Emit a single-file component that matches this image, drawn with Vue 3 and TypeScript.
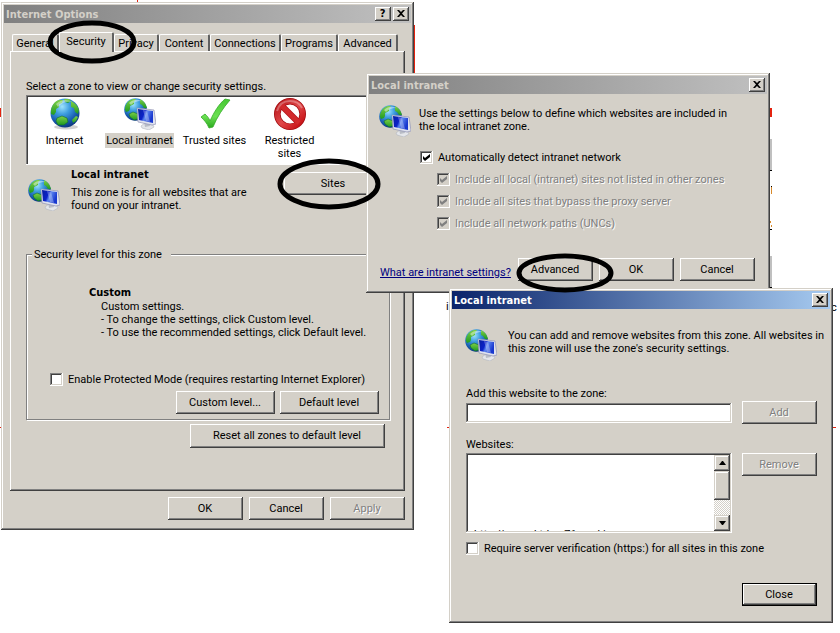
<script setup lang="ts">
import { ref } from 'vue'

interface Zone {
  id: string
  name: string
  icon: string
}

const tabs = ['General', 'Security', 'Privacy', 'Content', 'Connections', 'Programs', 'Advanced']
const activeTab = ref('Security')

const zones: Zone[] = [
  { id: 'internet', name: 'Internet', icon: 'globe' },
  { id: 'intranet', name: 'Local intranet', icon: 'intranet' },
  { id: 'trusted', name: 'Trusted sites', icon: 'tick' },
  { id: 'restricted', name: 'Restricted sites', icon: 'forbidden' },
]
const activeZone = ref('intranet')

const protectedMode = ref(false)
const autoDetect = ref(true)
const includeRules = ref([
  { id: 'local', label: 'Include all local (intranet) sites not listed in other zones', on: true },
  { id: 'proxy', label: 'Include all sites that bypass the proxy server', on: true },
  { id: 'unc', label: 'Include all network paths (UNCs)', on: true },
])

const newSite = ref('')
const sites = ref(['http://uawmktdvm71.mwkin.pes'])
const requireHttps = ref(false)
</script>

<template>
  <main class="desktop">
    <svg class="defs" width="0" height="0" aria-hidden="true">
      <defs>
        <radialGradient id="sea" cx="40%" cy="28%" r="75%">
          <stop offset="0" stop-color="#9fe3fb" />
          <stop offset="0.35" stop-color="#3f9fe0" />
          <stop offset="0.75" stop-color="#1557ac" />
          <stop offset="1" stop-color="#0c3479" />
        </radialGradient>
        <linearGradient id="land" x1="0" y1="0" x2="0" y2="1">
          <stop offset="0" stop-color="#7fd048" />
          <stop offset="1" stop-color="#1f9a22" />
        </linearGradient>
        <linearGradient id="screen" x1="0" y1="0" x2="1" y2="0.4">
          <stop offset="0" stop-color="#0a1fa0" />
          <stop offset="0.45" stop-color="#0b22c8" />
          <stop offset="0.6" stop-color="#5d86f0" />
          <stop offset="1" stop-color="#1838cf" />
        </linearGradient>
        <linearGradient id="leaf" x1="0" y1="0" x2="0" y2="1">
          <stop offset="0" stop-color="#46c832" />
          <stop offset="0.6" stop-color="#6be052" />
          <stop offset="1" stop-color="#2aa81e" />
        </linearGradient>
        <linearGradient id="ruby" x1="0" y1="0" x2="1" y2="1">
          <stop offset="0" stop-color="#b81418" />
          <stop offset="0.5" stop-color="#e0494a" />
          <stop offset="1" stop-color="#c40a0e" />
        </linearGradient>
        <symbol id="globe" viewBox="0 0 32 32">
          <ellipse cx="17" cy="29" rx="12" ry="2.500" fill="#000" opacity="0.18" />
          <circle cx="16" cy="15" r="14.500" fill="url(#sea)" />
          <path d="M2 12C3 7 6 3 10 2l4 0-1 3-3 1v3l-3 2 0 3-2 3-3-1z" fill="url(#land)" />
          <path d="M15 1l5 0 2 2-3 2-3-1z" fill="url(#land)" />
          <path d="M22 3c4 2 7 5 8 9l-1 4-3-2-1-4-3-1 0-3z" fill="url(#land)" />
          <path d="M8 20l5-2 5 2 1 4-4 3-6 0-2-4z" fill="url(#land)" stroke="#0d6b2c" stroke-width="0.600" />
          <path d="M27 18l2 1-2 4-3 2-1-3z" fill="url(#land)" />
          <path d="M7 6c5-5 12-5 16-2-5-1-10 0-14 5z" fill="#fff" opacity="0.4" />
        </symbol>
        <symbol id="intranet" viewBox="0 0 32 32">
          <circle cx="11.500" cy="11.500" r="11.300" fill="url(#sea)" />
          <path d="M1 10C2 5 5 2 9 1l3 0-2 3v2l-4 2 0 3-1 2-3 1-1-2z" fill="url(#land)" />
          <path d="M16 1c4 2 6 5 7 9l-3 0-2-3-2-1 0-3z" fill="url(#land)" />
          <path d="M5 16l4-2 5 2v5l-4 1-4-3z" fill="url(#land)" stroke="#0d6b2c" stroke-width="0.600" />
          <path d="M5 5c4-4 9-4 12-2-4 0-7 1-10 4z" fill="#fff" opacity="0.45" />
          <path d="M17 28l4-3 8 2 1 2-5 3-7-2z" fill="#e4e6ea" stroke="#b2b6bd" stroke-width="0.600" />
          <path d="M20 24h5l1 4-5 1z" fill="#b9bdc6" />
          <path d="M13 10l17 2 2 14-4 1-14-3z" fill="#dfe2ee" stroke="#9094b4" stroke-width="0.700" />
          <path d="M14 11l15 2v12l-14-3z" fill="url(#screen)" />
          <path d="M19 12l4 1 3 11-4-1z" fill="#fff" opacity="0.28" />
        </symbol>
        <symbol id="tick" viewBox="0 0 32 32">
          <path d="M2 19l4-3c2 2 4 4 5 7C15 14 20 6 26 1l5 1C24 10 18 19 14 29l-4 1C8 25 5 22 2 19z" fill="url(#leaf)" stroke="#35ab28" stroke-width="0.800" />
        </symbol>
        <symbol id="forbidden" viewBox="0 0 32 32">
          <circle cx="16" cy="16" r="12.700" fill="#fff" stroke="#a30c10" stroke-width="6.600" />
          <path d="M7 7l18 18" stroke="#b01216" stroke-width="6.200" />
          <circle cx="16" cy="16" r="12.700" fill="none" stroke="url(#ruby)" stroke-width="5" />
          <path d="M7 7l18 18" stroke="#d22a2c" stroke-width="4.800" />
          <path d="M3 13C5 6 10 3 16 3s10 3 12 7" fill="none" stroke="#fff" stroke-width="2" opacity="0.3" />
        </symbol>
        <symbol id="cross" viewBox="0 0 10 9">
          <path d="M1 1h2l2 2 2-2h2L6 4.500 9 8H7L5 6 3 8H1l3-3.500z" fill="#000" />
        </symbol>
      </defs>
    </svg>

    <!-- Page fragments that peek out behind the dialogs -->
    <svg class="layer" width="840" height="633" aria-hidden="true">
      <g fill="#e4230f">
        <path d="M137 0h1v2h-1z" />
        <path d="M0 108h2v9H0z" />
        <path d="M413 25h2v48h-2z" />
        <path d="M770 108h2v9h-2z" />
        <path d="M0 427h2v1H0zM447 427h2v1h-2zM833 427h3v1h-3z" />
      </g>
      <path d="M770 139h2v31h-2zM770 256h2v31h-2z" fill="#c0c0c0" />
      <path d="M770 170h2v1h-2zM770 287h2v1h-2zM770 229h2v1h-2zM771 186h1v1h-1z" fill="#000" />
      <path d="M771 187h1v7h-1zM770 221h1v2h-1zM771 225h1v2h-1z" fill="#d98a2b" />
    </svg>
    <span class="fragment fragment-left">i</span>
    <span class="fragment fragment-right">c</span>

    <!-- Internet Options -->
    <section class="window options" aria-labelledby="options-title">
      <header class="titlebar">
        <h1 id="options-title">Internet Options</h1>
        <button type="button" class="caption help" aria-label="Help">?</button>
        <button type="button" class="caption" aria-label="Close">
          <svg width="10" height="9"><use href="#cross" /></svg>
        </button>
      </header>

      <div class="tabs" role="tablist">
        <button
          v-for="tab in tabs"
          :key="tab"
          type="button"
          role="tab"
          class="tab"
          :class="{ active: tab === activeTab }"
          :aria-selected="tab === activeTab"
          @click="activeTab = tab"
        >{{ tab }}</button>
      </div>

      <div class="panel" role="tabpanel">
        <p id="zones-label">Select a zone to view or change security settings.</p>
        <div class="zones" role="listbox" aria-labelledby="zones-label">
          <button
            v-for="zone in zones"
            :key="zone.id"
            type="button"
            role="option"
            class="zone"
            :class="{ active: zone.id === activeZone }"
            :aria-selected="zone.id === activeZone"
            @click="activeZone = zone.id"
          >
            <svg width="32" height="32"><use :href="'#' + zone.icon" /></svg>
            <span>{{ zone.name }}</span>
          </button>
        </div>

        <div class="zone-info">
          <svg class="zone-icon" width="32" height="32"><use href="#intranet" /></svg>
          <div class="zone-text">
            <h2>Local intranet</h2>
            <p>This zone is for all websites that are<br />found on your intranet.</p>
          </div>
          <button type="button" class="btn wide">Sites</button>
        </div>

        <fieldset class="level">
          <legend>Security level for this zone</legend>
          <div class="level-text">
            <h2>Custom</h2>
            <p>Custom settings.<br />- To change the settings, click Custom level.<br />- To use the recommended settings, click Default level.</p>
          </div>
          <label class="check">
            <input v-model="protectedMode" type="checkbox" />
            <span>Enable Protected Mode (requires restarting Internet Explorer)</span>
          </label>
          <div class="level-actions">
            <button type="button" class="btn wide">Custom level...</button>
            <button type="button" class="btn wide">Default level</button>
          </div>
        </fieldset>

        <div class="reset-row">
          <button type="button" class="btn reset">Reset all zones to default level</button>
        </div>
      </div>

      <footer class="actions">
        <button type="button" class="btn">OK</button>
        <button type="button" class="btn">Cancel</button>
        <button type="button" class="btn" disabled>Apply</button>
      </footer>
    </section>

    <!-- Local intranet: detection settings -->
    <section class="window detect" aria-labelledby="detect-title">
      <header class="titlebar">
        <h1 id="detect-title">Local intranet</h1>
        <button type="button" class="caption" aria-label="Close">
          <svg width="10" height="9"><use href="#cross" /></svg>
        </button>
      </header>
      <div class="intro">
        <svg width="32" height="32"><use href="#intranet" /></svg>
        <p>Use the settings below to define which websites are included in<br />the local intranet zone.</p>
      </div>
      <div class="rules">
        <label class="check">
          <input v-model="autoDetect" type="checkbox" />
          <span>Automatically detect intranet network</span>
        </label>
        <label v-for="rule in includeRules" :key="rule.id" class="check sub">
          <input v-model="rule.on" type="checkbox" :disabled="autoDetect" />
          <span>{{ rule.label }}</span>
        </label>
      </div>
      <footer class="detect-actions">
        <a href="#intranet-settings">What are intranet settings?</a>
        <button type="button" class="btn">Advanced</button>
        <button type="button" class="btn">OK</button>
        <button type="button" class="btn">Cancel</button>
      </footer>
    </section>

    <!-- Local intranet: website list -->
    <section class="window websites" aria-labelledby="websites-title">
      <header class="titlebar current">
        <h1 id="websites-title">Local intranet</h1>
        <button type="button" class="caption" aria-label="Close">
          <svg width="10" height="9"><use href="#cross" /></svg>
        </button>
      </header>
      <div class="intro">
        <svg width="32" height="32"><use href="#intranet" /></svg>
        <p>You can add and remove websites from this zone. All websites in<br />this zone will use the zone's security settings.</p>
      </div>
      <div class="site-form">
        <label for="new-site">Add this website to the zone:</label>
        <input id="new-site" v-model="newSite" class="field" type="text" />
        <button type="button" class="btn" disabled>Add</button>
        <span id="sites-label" class="sites-label">Websites:</span>
        <div class="site-list">
          <ul aria-labelledby="sites-label">
            <li v-for="site in sites" :key="site">{{ site }}</li>
          </ul>
          <div class="scrollbar">
            <button type="button" class="arrow" aria-label="Scroll up">
              <svg width="7" height="4"><path d="M3 0h1l3 4H0z" /></svg>
            </button>
            <div class="thumb"></div>
            <div class="track"></div>
            <button type="button" class="arrow" aria-label="Scroll down">
              <svg width="7" height="4"><path d="M0 0h7L4 4H3z" /></svg>
            </button>
          </div>
        </div>
        <button type="button" class="btn" disabled>Remove</button>
      </div>
      <label class="check https">
        <input v-model="requireHttps" type="checkbox" />
        <span>Require server verification (https:) for all sites in this zone</span>
      </label>
      <footer class="close-row">
        <button type="button" class="btn default">Close</button>
      </footer>
    </section>

    <!-- Hand-drawn rings around the steps to follow -->
    <svg class="layer" width="840" height="633" aria-hidden="true">
      <g fill="none" stroke="#000" stroke-width="5">
        <ellipse cx="92" cy="42" rx="42" ry="19" />
        <ellipse cx="329" cy="184" rx="49" ry="23" />
        <ellipse cx="565" cy="273" rx="46" ry="17" />
      </g>
    </svg>
  </main>
</template>

<style>
body {
  margin: 0;
  background: #fff;
}
</style>

<style scoped>
.desktop {
  position: relative;
  min-height: 100vh;
  overflow: hidden;
  color: #000;
  font: 11px/13px Roboto, Tahoma, sans-serif;
}

.desktop * {
  box-sizing: border-box;
}

.defs {
  position: absolute;
}

.layer {
  position: absolute;
  top: 0;
  left: 0;
  pointer-events: none;
}

.fragment {
  position: absolute;
}

.fragment-left {
  top: 300px;
  left: 446px;
}

.fragment-right {
  top: 301px;
  left: 831px;
}

h1,
h2,
p,
ul {
  margin: 0;
  padding: 0;
  font-size: 11px;
  line-height: 13px;
  white-space: nowrap;
}

h1,
h2 {
  font-family: 'DejaVu Sans Condensed', Tahoma, sans-serif;
}

ul {
  list-style: none;
}

button,
input {
  margin: 0;
  padding: 0;
  border: 0;
  color: inherit;
  font: inherit;
}

svg {
  display: block;
  flex: none;
}

/* Windows */
.window {
  position: absolute;
  padding: 3px;
  background: #d4d0c8;
  box-shadow:
    inset -1px -1px #404040,
    inset 1px 1px #d4d0c8,
    inset -2px -2px #808080,
    inset 2px 2px #fff;
}

.options {
  top: 2px;
  left: 1px;
  width: 413px;
}

.detect {
  top: 73px;
  left: 366px;
  width: 404px;
}

.websites {
  top: 288px;
  left: 449px;
  width: 384px;
}

.titlebar {
  display: flex;
  align-items: center;
  gap: 2px;
  height: 18px;
  padding: 0 2px;
  color: #d4d0c8;
  background: linear-gradient(90deg, #808080, #c0c0c0);
}

.titlebar.current {
  color: #fff;
  background: linear-gradient(90deg, #0a246a, #a6caf0);
}

.titlebar h1 {
  flex: 1;
}

.caption {
  display: grid;
  place-items: center;
  width: 16px;
  height: 14px;
  padding: 0 1px 1px 0;
  color: #000;
  background: #d4d0c8;
  box-shadow:
    inset -1px -1px #404040,
    inset 1px 1px #fff,
    inset -2px -2px #808080;
}

.help {
  font-family: 'DejaVu Sans Condensed', Tahoma, sans-serif;
  font-weight: bold;
}

/* Push buttons */
.btn {
  flex: none;
  width: 75px;
  height: 23px;
  padding: 0 1px 1px 0;
  background: #d4d0c8;
  white-space: nowrap;
  box-shadow:
    inset -1px -1px #404040,
    inset 1px 1px #fff,
    inset -2px -2px #808080;
}

.btn.wide {
  width: 99px;
}

.btn.reset {
  width: 195px;
  height: 24px;
}

.btn.default {
  border: 1px solid #000;
}

.btn:disabled,
.check input:disabled + span {
  color: #808080;
  text-shadow: 1px 1px #fff;
}

/* Check boxes */
.check {
  display: flex;
  align-items: center;
  gap: 5px;
  white-space: nowrap;
}

.check input {
  display: grid;
  place-items: center;
  flex: none;
  width: 13px;
  height: 13px;
  appearance: none;
  background: #fff;
  box-shadow:
    inset -1px -1px #fff,
    inset 1px 1px #808080,
    inset -2px -2px #d4d0c8,
    inset 2px 2px #404040;
}

.check input:checked::after {
  width: 7px;
  height: 7px;
  background: #000;
  clip-path: polygon(0 2px, 2px 4px, 7px 0, 7px 3px, 2px 7px, 0 5px);
  content: '';
}

.check input:disabled {
  background: #d4d0c8;
}

.check input:disabled::after {
  background: #808080;
}

/* Tabs */
.tabs {
  display: grid;
  grid-template-columns: 47px 55px 45px 51px 71px 57px 60px;
  align-items: end;
  padding: 9px 8px 0;
}

.tab {
  height: 17px;
  border: solid;
  border-width: 1px 2px 0 1px;
  border-color: #fff #606060 #fff #fff;
  border-radius: 2px 2px 0 0;
  background: #d4d0c8;
  white-space: nowrap;
}

.tab.active {
  z-index: 1;
  height: 20px;
  margin-bottom: -1px;
  padding-bottom: 3px;
}

.panel {
  margin: 0 6px;
  padding: 29px 14px 43px 16px;
  box-shadow:
    inset -1px -1px #404040,
    inset 1px 1px #fff,
    inset -2px -2px #808080;
}

.zones {
  display: grid;
  grid-template-columns: repeat(auto-fill, 75px);
  align-items: start;
  height: 70px;
  margin-top: 2px;
  padding: 3px 1px;
  background: #fff;
  box-shadow:
    inset -1px -1px #fff,
    inset 1px 1px #808080,
    inset 2px 2px #404040;
}

.zone {
  display: flex;
  flex-direction: column;
  align-items: center;
  gap: 4px;
  padding: 0 10px;
  background: none;
}

.zone span {
  min-width: min-content;
}

.zone:not(:last-child) span {
  white-space: nowrap;
}

.zone.active span {
  background: #d4d0c8;
  box-shadow: 0 0 0 1px #d4d0c8;
}

.zone-info {
  display: flex;
  margin-top: 3px;
}

.zone-icon {
  margin: 11px 11px 0 2px;
}

.zone-text {
  flex: 1;
}

.zone-text p {
  margin-top: 5px;
}

.zone-info .btn {
  margin: 4px 8px 0 0;
}

.level {
  min-width: 0;
  margin: 36px 1px 0 0;
  padding: 25px 10px 5px 23px;
  border: 1px solid #808080;
  box-shadow:
    1px 1px #fff,
    inset 1px 1px #fff;
}

.level legend {
  width: 139px;
  margin-left: -18px;
  padding: 0 2px;
  background: #d4d0c8;
  white-space: nowrap;
}

.level-text {
  padding-left: 39px;
}

.level-text p {
  margin-top: 1px;
  padding-left: 12px;
}

.level .check {
  margin-top: 34px;
}

.level-actions {
  display: flex;
  justify-content: flex-end;
  gap: 5px;
  margin-top: 5px;
}

.reset-row {
  display: flex;
  justify-content: flex-end;
  margin-top: 4px;
  padding-right: 6px;
}

.actions {
  display: flex;
  justify-content: flex-end;
  gap: 6px;
  padding: 6px 6px 7px;
}

/* Dialog bodies */
.intro {
  display: flex;
  gap: 8px;
  padding: 11px 10px 0;
}

.intro p {
  padding-top: 2px;
}

.rules {
  display: grid;
  gap: 9px;
  padding: 14px 10px 0 51px;
}

.rules .sub {
  padding-left: 17px;
}

.detect-actions {
  display: flex;
  align-items: center;
  gap: 6px;
  padding: 28px 12px 9px 11px;
}

.detect-actions a {
  flex: 1;
  padding-top: 6px;
  color: #00007f;
  white-space: nowrap;
}

.websites .intro {
  gap: 11px;
  padding: 20px 12px 0 13px;
}

.websites .intro p {
  padding-top: 0;
}

.site-form {
  display: grid;
  grid-template-columns: 1fr 75px;
  column-gap: 10px;
  padding: 26px 13px 0 14px;
}

.site-form label,
.sites-label {
  grid-column: 1 / -1;
}

.site-form label {
  padding-bottom: 1px;
}

.sites-label {
  padding: 14px 0 2px;
}

.field,
.site-list {
  background: #fff;
  box-shadow:
    inset -1px -1px #fff,
    inset 1px 1px #808080,
    inset -2px -2px #d4d0c8,
    inset 2px 2px #404040;
}

.field {
  width: 100%;
  height: 20px;
  margin-top: 2px;
  padding: 2px 4px;
}

.site-list {
  display: flex;
  height: 80px;
  padding: 2px;
}

.site-list ul {
  flex: 1;
  overflow: hidden;
  padding: 73px 0 0 6px;
}

.scrollbar {
  display: flex;
  flex-direction: column;
  width: 16px;
}

.arrow,
.thumb {
  flex: none;
  background: #d4d0c8;
  box-shadow:
    inset -1px -1px #404040,
    inset 1px 1px #d4d0c8,
    inset -2px -2px #808080,
    inset 2px 2px #fff;
}

.arrow {
  display: grid;
  place-items: center;
  height: 16px;
}

.thumb {
  height: 29px;
}

.track {
  flex: 1;
  background: repeating-conic-gradient(#fff 0 25%, #d4d0c8 0 50%) 0 0 / 2px 2px;
}

.https {
  padding: 9px 14px 0;
}

.close-row {
  display: flex;
  justify-content: flex-end;
  padding: 28px 13px 14px;
}
</style>
